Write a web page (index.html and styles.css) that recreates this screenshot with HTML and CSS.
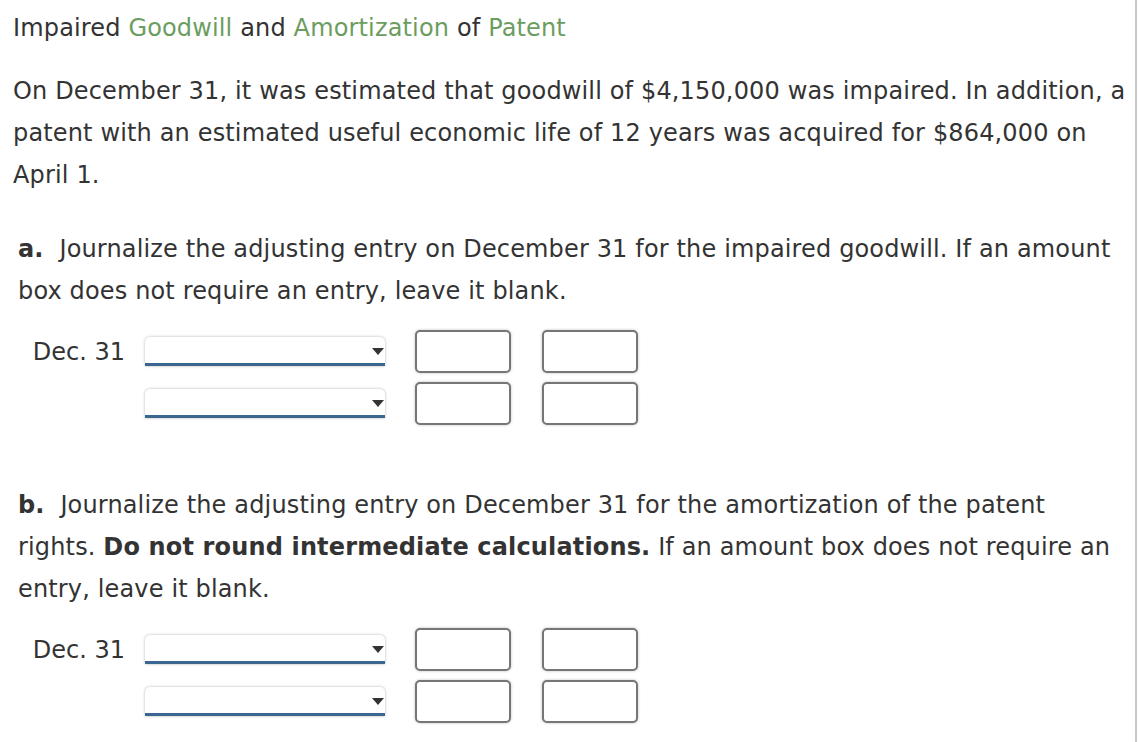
FILE: index.html
```html
<!DOCTYPE html>
<html>
<head>
<meta charset="utf-8">
<link rel="stylesheet" href="styles.css">
</head>
<body>
<div class="page">
  <h1 class="title">Impaired <span class="term">Goodwill</span> and <span class="term">Amortization</span> of <span class="term">Patent</span></h1>
  <p class="intro">On December 31, it was estimated that goodwill of $4,150,000 was impaired. In addition, a patent with an estimated useful economic life of 12 years was acquired for $864,000 on April 1.</p>

  <section class="part part-a">
    <p class="question"><b class="tag">a.</b> Journalize the adjusting entry on December 31 for the impaired goodwill. If an amount box does not require an entry, leave it blank.</p>
    <div class="journal">
      <div class="label">Dec. 31</div>
      <div class="sel"><select><option></option></select></div>
      <input class="amt" type="text">
      <input class="amt" type="text">
      <div class="label"></div>
      <div class="sel"><select><option></option></select></div>
      <input class="amt" type="text">
      <input class="amt" type="text">
    </div>
  </section>

  <section class="part part-b">
    <p class="question"><b class="tag">b.</b> Journalize the adjusting entry on December 31 for the amortization of the patent rights. <b>Do not round intermediate calculations.</b> If an amount box does not require an entry, leave it blank.</p>
    <div class="journal">
      <div class="label">Dec. 31</div>
      <div class="sel"><select><option></option></select></div>
      <input class="amt" type="text">
      <input class="amt" type="text">
      <div class="label"></div>
      <div class="sel"><select><option></option></select></div>
      <input class="amt" type="text">
      <input class="amt" type="text">
    </div>
  </section>
</div>
</body>
</html>
```

FILE: styles.css
```css
html, body {
  margin: 0;
  padding: 0;
  background: #fff;
}
body {
  font-family: "DejaVu Sans", Verdana, sans-serif;
  color: #333;
  font-size: 24px;
  letter-spacing: 0.15px;
}
.page {
  width: 1135px;
  min-height: 742px;
  border-right: 2px solid #c9c9c9;
  box-sizing: content-box;
}
.title {
  margin: 0;
  padding: 7px 0 0 13px;
  font-size: 24px;
  font-weight: normal;
  line-height: 42px;
}
.term {
  color: #6b9d5f;
}
.intro {
  margin: 21px 0 0 0;
  padding: 0 2px 0 13px;
  line-height: 42px;
}
.part {
  padding-left: 18px;
  padding-right: 17px;
}
.part-a {
  margin-top: 32px;
}
.part-b {
  margin-top: 59px;
}
.question {
  margin: 0;
  line-height: 42px;
}
.tag {
  display: inline-block;
  margin-right: 8px;
}
.journal {
  margin-top: 18px;
  display: grid;
  grid-template-columns: 127px 270px 127px 96px;
  row-gap: 9px;
  align-items: center;
}
.label {
  text-align: right;
  padding-right: 20px;
  line-height: 28px;
  letter-spacing: 0;
}
.sel {
  position: relative;
  width: 240px;
  height: 29px;
}
.sel select {
  appearance: none;
  -webkit-appearance: none;
  display: block;
  width: 240px;
  height: 29px;
  margin: 0;
  border: none;
  border-bottom: 3px solid #3a6690;
  border-radius: 5px 5px 0 0;
  background: #fff;
  box-shadow: 0 0 3px rgba(0,0,0,0.3);
  font: inherit;
  outline: none;
}
.sel::after {
  content: "";
  position: absolute;
  right: 1px;
  top: 11px;
  border-left: 6px solid transparent;
  border-right: 6px solid transparent;
  border-top: 7px solid #333;
}
.amt {
  display: block;
  width: 96px;
  height: 43px;
  box-sizing: border-box;
  margin: 0;
  border: 2px solid #767676;
  border-radius: 5px;
  box-shadow: 0 0 3px rgba(0,0,0,0.25);
  background: #fff;
  font: inherit;
  outline: none;
}
```
